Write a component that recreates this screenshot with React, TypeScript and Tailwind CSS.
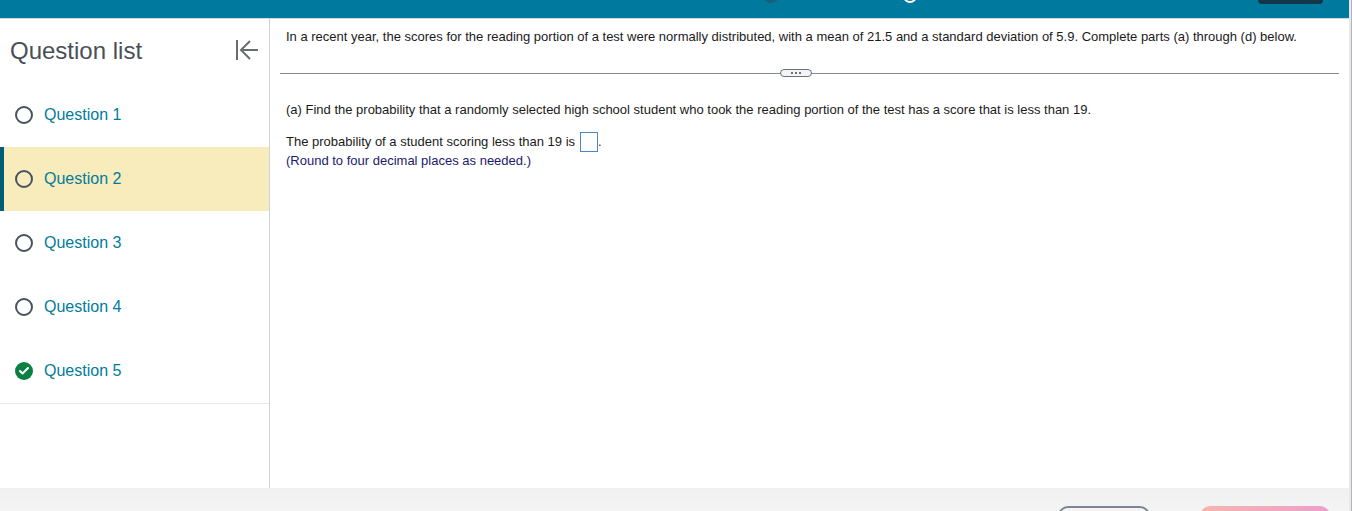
import React from 'react'
import { Check } from 'lucide-react'

const questions = [
  { name: 'Question 1', done: false, active: false },
  { name: 'Question 2', done: false, active: true },
  { name: 'Question 3', done: false, active: false },
  { name: 'Question 4', done: false, active: false },
  { name: 'Question 5', done: true, active: false },
]

const QuestionRow = ({ name, done, active }: any) => {
  return (
    <div className={active ? 'h-16 flex items-center gap-[11px] pl-[11px] bg-[#f8ebbc] border-l-4 border-[#005f75]' : 'h-16 flex items-center gap-[11px] pl-[15px]'}>
      {done ? (
        <span className="w-[18px] h-[18px] rounded-full bg-[#0b8043] flex items-center justify-center">
          <Check size={12} strokeWidth={4} className="text-white" />
        </span>
      ) : (
        <span className="w-[18px] h-[18px] rounded-full border-2 border-[#46535f]" />
      )}
      <span className="text-[16px] text-[#007c9d]">{name}</span>
    </div>
  )
}

export default function App() {
  return (
    <div className="w-[1352px] h-[511px] overflow-hidden bg-white flex border-r border-[#b4b4b8] font-['Liberation_Sans',Arial,sans-serif]">
      <div className="w-[1349px] shrink-0 flex flex-col">
        <div className="h-[18px] shrink-0 bg-[#00799e] relative">
          <div className="absolute left-[762px] top-[-6px] w-[18px] h-[9px] rounded-b-[9px] bg-[#1a5f78]" />
          <div className="absolute left-[903px] top-[-11px] w-[14px] h-[14px] rounded-full border-2 border-white" />
          <div className="absolute left-[1258px] top-0 w-[65px] h-[4px] rounded-b-[12px] bg-[#12374a]" />
        </div>
        <div className="h-px shrink-0 bg-[#d5d8de]" />
        <div className="flex h-[469px] shrink-0">
          <div className="w-[270px] shrink-0 border-r border-[#cfd0da] flex flex-col">
            <div className="h-[64px] shrink-0 flex items-center justify-between pl-[10px] pr-[11px]">
              <span className="text-[24px] text-[#4a4f55]">Question list</span>
              <svg width="22" height="20" viewBox="0 0 22 20" fill="none" stroke="#6a6d70" strokeWidth="2" className="mt-[-2px]">
                <path d="M1 0v20M22 10H5M14 1l-9 9 9 9" />
              </svg>
            </div>
            <div className="flex flex-col">
              {questions.map((q) => (
                <QuestionRow key={q.name} {...q} />
              ))}
            </div>
            <div className="border-t border-[#e8e8ea]" />
          </div>
          <div className="flex-1 pl-[10px] pr-[10px] text-[13px] text-[#1a1a1a]">
            <p className="pl-[6px] pt-[10px] h-[54px] leading-[15px]">
              In a recent year, the scores for the reading portion of a test were normally distributed, with a mean of 21.5 and a standard deviation of 5.9. Complete parts (a) through (d) below.
            </p>
            <div className="relative h-px bg-[#858a92]">
              <div className="absolute left-[500px] top-[-4px] w-[32px] h-[8px] rounded-full border border-[#6a7280] bg-[#f3f4f6] flex items-center justify-center gap-[2px]">
                <span className="w-[2px] h-[2px] rounded-full bg-[#444]" />
                <span className="w-[2px] h-[2px] rounded-full bg-[#444]" />
                <span className="w-[2px] h-[2px] rounded-full bg-[#444]" />
              </div>
            </div>
            <div className="pl-[6px] pt-[28px]">
              <p className="leading-[15px]">(a) Find the probability that a randomly selected high school student who took the reading portion of the test has a score that is less than 19.</p>
              <p className="mt-[15px] leading-[20px] flex items-center">
                The probability of a student scoring less than 19 is
                <span className="inline-block ml-[5px] w-[18px] h-[20px] border border-[#4a86c8]" />
                <span>.</span>
              </p>
              <p className="leading-[17px] text-[#1a1a6e]">(Round to four decimal places as needed.)</p>
            </div>
          </div>
        </div>
        <div className="flex-1 bg-gradient-to-b from-[#f0f0f0] to-[#f5f5f5] flex justify-end items-start gap-[50px] pt-[18px] pr-[19px]">
          <div className="w-[92px] h-[10px] rounded-t-[18px] border-2 border-b-0 border-[#7d8494]" />
          <div className="w-[130px] h-[10px] rounded-t-[18px] bg-gradient-to-r from-[#f5b5b0] to-[#ee9ec9]" />
        </div>
      </div>
      <div className="flex-1 bg-[#e8e8ea]" />
    </div>
  )
}
